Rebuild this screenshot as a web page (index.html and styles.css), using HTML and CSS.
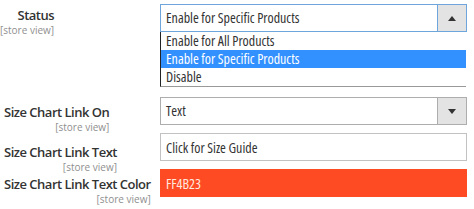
FILE: index.html
```html
<!DOCTYPE html>
<html lang="en">
  <head>
    <meta charset="UTF-8" />
    <title>Size Chart Settings</title>
    <link rel="stylesheet" href="styles.css">
  </head>
  <body>
    <div class="config">
      <div class="row row-status">
        <div class="label">
          <div class="label-inner">
            <span class="label-title">Status</span>
            <span class="scope">[store view]</span>
          </div>
        </div>
        <div class="field">
          <div class="select select-open">
            <span class="select-value">Enable for Specific Products</span>
            <span class="select-arrow"><span class="caret caret-up"></span></span>
          </div>
          <ul class="options">
            <li>Enable for All Products</li>
            <li class="selected">Enable for Specific Products</li>
            <li>Disable</li>
          </ul>
        </div>
      </div>

      <div class="row">
        <div class="label">
          <div class="label-inner">
            <span class="label-title">Size Chart Link On</span>
            <span class="scope">[store view]</span>
          </div>
        </div>
        <div class="field">
          <div class="select">
            <span class="select-value">Text</span>
            <span class="select-arrow"><span class="caret"></span></span>
          </div>
        </div>
      </div>

      <div class="row row-link-text">
        <div class="label">
          <div class="label-inner">
            <span class="label-title">Size Chart Link Text</span>
            <span class="scope">[store view]</span>
          </div>
        </div>
        <div class="field">
          <input class="text-input" type="text" value="Click for Size Guide" />
        </div>
      </div>

      <div class="row">
        <div class="label">
          <div class="label-inner">
            <span class="label-title">Size Chart Link Text Color</span>
            <span class="scope">[store view]</span>
          </div>
        </div>
        <div class="field">
          <input class="text-input color-input" type="text" value="FF4B23" />
        </div>
      </div>
    </div>
  </body>
</html>
```

FILE: styles.css
```css
:root {
  --text-color: #333;
  --scope-color: #8f8f8f;
  --border-color: #adadad;
  --focus-border: #6ea6dc;
  --field-height: 28px;
}
* {
  box-sizing: border-box;
}
html,
body {
  margin: 0;
  padding: 0;
  background: #fff;
  color: var(--text-color);
  font-family: 'Open Sans', 'Noto Sans', sans-serif;
}
.config {
  display: flex;
  flex-direction: column;
  padding-top: 4px;
}
.row {
  display: flex;
  align-items: flex-start;
  margin-bottom: 8px;
}
.row-status {
  margin-bottom: 10px;
}
.label {
  width: 160px;
  height: var(--field-height);
  flex: none;
  padding-left: 4px;
  padding-top: 3px;
}
.row-status .label {
  padding-left: 0;
  padding-top: 0;
  margin-top: -1px;
}
.row-link-text .label {
  padding-top: 7px;
}
.label-inner {
  display: inline-flex;
  flex-direction: column;
  align-items: flex-end;
}
.label-title {
  font-size: 13px;
  font-weight: 600;
  line-height: 17px;
  letter-spacing: -0.5px;
  white-space: nowrap;
}
.scope {
  font-size: 10px;
  line-height: 12px;
  color: var(--scope-color);
  white-space: nowrap;
}
.field {
  width: 307px;
  flex: none;
  font-stretch: 80%;
}
.select {
  display: flex;
  height: var(--field-height);
  border: 1px solid var(--border-color);
  font-size: 14px;
}
.select-open {
  border-color: var(--focus-border);
}
.select-value {
  flex: 1;
  padding: 0 5px;
  line-height: 26px;
}
.select-arrow {
  width: 29px;
  background: #e3e3e3;
  border-left: 1px solid var(--border-color);
  display: flex;
  align-items: center;
  justify-content: center;
}
.select-open .select-arrow {
  border-left-color: var(--focus-border);
}
.caret {
  width: 0;
  height: 0;
  border-left: 4px solid transparent;
  border-right: 4px solid transparent;
  border-top: 5px solid #333;
}
.caret-up {
  border-top: none;
  border-bottom: 5px solid #333;
}
.options {
  list-style: none;
  margin: 0 1px 0 0;
  padding: 0;
  border-left: 1px solid #222;
  border-bottom: 1px solid #999;
  font-size: 14px;
}
.options li {
  height: 18px;
  line-height: 18px;
  padding-left: 5px;
}
.options .selected {
  background: #3390ff;
  color: #fff;
}
.text-input {
  display: block;
  width: 100%;
  height: var(--field-height);
  border: 1px solid #c2c2c2;
  padding: 0 5px;
  font: inherit;
  font-size: 14px;
  color: var(--text-color);
  outline: none;
}
.color-input {
  background: #ff4b23;
  border-color: #ff4b23;
  color: #ffe8df;
}
```
